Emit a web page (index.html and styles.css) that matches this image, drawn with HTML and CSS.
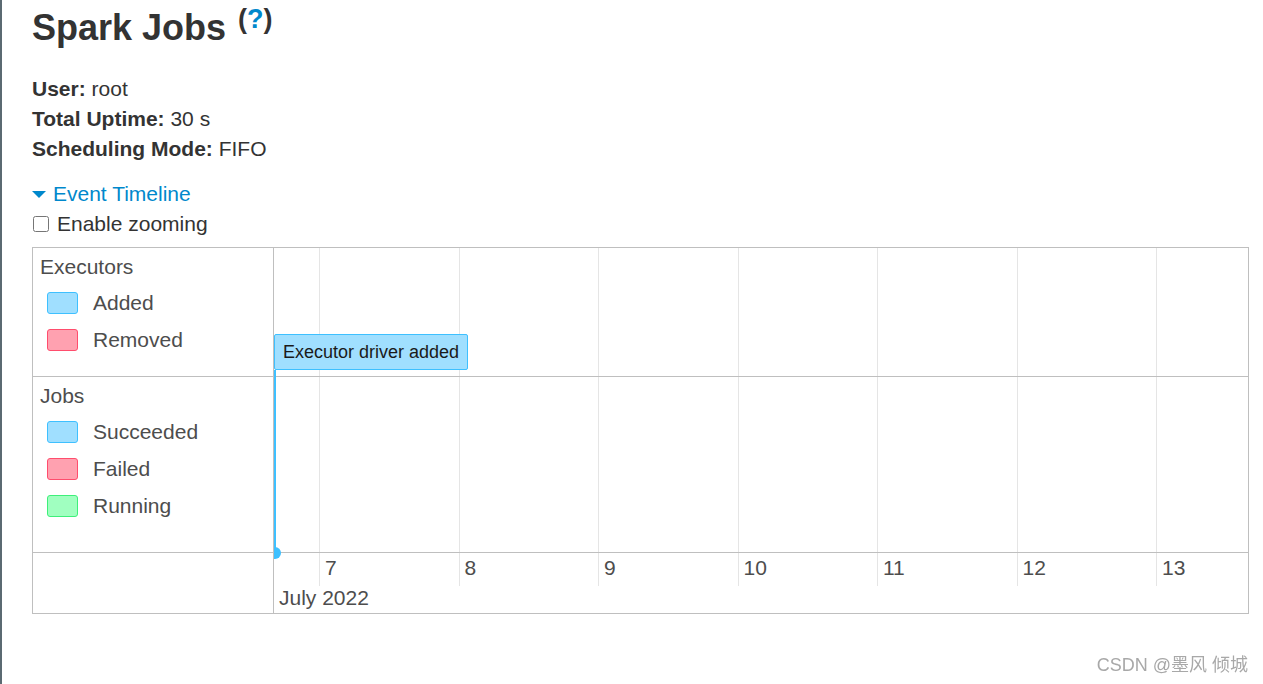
FILE: index.html
```html
<!DOCTYPE html>
<html lang="en">
<head>
  <meta charset="UTF-8" />
  <title>Spark Jobs</title>
  <link rel="stylesheet" href="styles.css">
</head>
<body>

  <div class="container">
    <h3 class="page-title">Spark Jobs <sup>(<a href="#">?</a>)</sup></h3>

    <ul class="summary">
      <li><strong>User:</strong> root</li>
      <li><strong>Total Uptime:</strong> 30 s</li>
      <li><strong>Scheduling Mode:</strong> FIFO</li>
    </ul>

    <div class="timeline-toggle">
      <span class="arrow-open"></span><a href="#">Event Timeline</a>
    </div>
    <label class="zoom-toggle"><input type="checkbox" /> Enable zooming</label>

    <div class="timeline">
      <div class="labels">
        <div class="group group-executors">
          <div class="group-name">Executors</div>
          <div class="legend">
            <div class="legend-row"><span class="swatch swatch-added"></span>Added</div>
            <div class="legend-row"><span class="swatch swatch-removed"></span>Removed</div>
          </div>
        </div>
        <div class="group group-jobs">
          <div class="group-name">Jobs</div>
          <div class="legend">
            <div class="legend-row"><span class="swatch swatch-added"></span>Succeeded</div>
            <div class="legend-row"><span class="swatch swatch-removed"></span>Failed</div>
            <div class="legend-row"><span class="swatch swatch-running"></span>Running</div>
          </div>
        </div>
        <div class="axis-spacer"></div>
      </div>

      <div class="canvas">
        <div class="band band-executors">
          <div class="cell"></div><div class="cell"></div><div class="cell"></div><div class="cell"></div>
          <div class="cell"></div><div class="cell"></div><div class="cell"></div><div class="cell"></div>
        </div>
        <div class="band band-jobs">
          <div class="cell"></div><div class="cell"></div><div class="cell"></div><div class="cell"></div>
          <div class="cell"></div><div class="cell"></div><div class="cell"></div><div class="cell"></div>
        </div>
        <div class="axis">
          <div class="minor-row">
            <div class="cell"></div>
            <div class="cell">7</div>
            <div class="cell">8</div>
            <div class="cell">9</div>
            <div class="cell">10</div>
            <div class="cell">11</div>
            <div class="cell">12</div>
            <div class="cell">13</div>
          </div>
          <div class="major-label">July 2022</div>
        </div>

        <div class="item">Executor driver added</div>
        <div class="item-line"></div>
        <div class="item-dot"></div>
      </div>
    </div>
  </div>

  <div class="watermark">CSDN @墨风 倾城</div>

</body>
</html>
```

FILE: styles.css
```css
body {
  margin: 0;
  border-left: 2px solid #5b6a72;
  min-height: 684px;
  box-sizing: border-box;
  font-family: "Liberation Sans", Arial, sans-serif;
  font-size: 21px;
  line-height: 30px;
  color: #333;
  background: #fff;
}

a {
  color: #0088cc;
  text-decoration: none;
}

.container {
  padding: 0 14px 0 30px;
}

.page-title {
  margin: 0;
  font-size: 36px;
  line-height: 55px;
  font-weight: bold;
}

.page-title sup {
  font-size: 27px;
  line-height: 0;
  vertical-align: 12px;
  margin-left: 2px;
}

.summary {
  list-style: none;
  margin: 19px 0 0;
  padding: 0;
}

.timeline-toggle {
  margin-top: 15px;
  display: flex;
  align-items: center;
}

.arrow-open {
  width: 0;
  height: 0;
  border-left: 7px solid transparent;
  border-right: 7px solid transparent;
  border-top: 7px solid #0088cc;
  margin: 1px 7px 0 0;
}

.zoom-toggle {
  display: flex;
  align-items: center;
}

.zoom-toggle input {
  width: 16px;
  height: 16px;
  margin: 0 8px 0 1px;
}

/* timeline */

.timeline {
  margin-top: 8px;
  border: 1px solid #bfbfbf;
  display: grid;
  grid-template-columns: 241px 1fr;
  color: #4d4d4d;
  line-height: 24px;
}

.labels {
  border-right: 1px solid #bfbfbf;
}

.group {
  box-sizing: border-box;
  border-bottom: 1px solid #bfbfbf;
  padding: 7px 0 0 7px;
}

.group-executors,
.band-executors {
  height: 129px;
}

.group-jobs,
.band-jobs {
  height: 176px;
}

.axis-spacer,
.axis {
  height: 60px;
}

.legend {
  margin: 12px 0 0 7px;
  display: flex;
  flex-direction: column;
  gap: 13px;
}

.legend-row {
  height: 24px;
  display: flex;
  align-items: center;
  gap: 15px;
}

.swatch {
  width: 31px;
  height: 22px;
  box-sizing: border-box;
  border-radius: 3px;
  border: 1.5px solid;
}

.swatch-added {
  background: #a0dfff;
  border-color: #3ec0ff;
}

.swatch-removed {
  background: #ffa1b0;
  border-color: #ff4d6d;
}

.swatch-running {
  background: #a0ffc0;
  border-color: #3eef7a;
}

.canvas {
  position: relative;
  overflow: hidden;
}

.band,
.minor-row {
  box-sizing: border-box;
  display: grid;
  grid-template-columns: 45px repeat(6, 139.5px) 1fr;
}

.band {
  border-bottom: 1px solid #bfbfbf;
}

.cell + .cell {
  border-left: 1px solid #e5e5e5;
}

.minor-row {
  height: 33px;
}

.minor-row .cell {
  padding: 3px 0 0 5px;
}

.major-label {
  padding-left: 5px;
}

.item {
  position: absolute;
  left: 0;
  top: 86px;
  padding: 6px 8px;
  font-size: 18px;
  line-height: 22px;
  color: #1a1a1a;
  background: #a0dfff;
  border: 1px solid #3ec0ff;
  border-radius: 2px;
  white-space: nowrap;
}

.item-line {
  position: absolute;
  left: 0;
  top: 122px;
  width: 2px;
  height: 183px;
  background: #3ec0ff;
}

.item-dot {
  position: absolute;
  left: -5px;
  top: 299px;
  width: 12px;
  height: 12px;
  border-radius: 50%;
  background: #3ec0ff;
}

.watermark {
  position: fixed;
  right: 15px;
  bottom: 8px;
  font-family: "Liberation Sans", "Noto Sans CJK SC", sans-serif;
  font-size: 18px;
  line-height: 21px;
  color: #a8a8a8;
}
```
